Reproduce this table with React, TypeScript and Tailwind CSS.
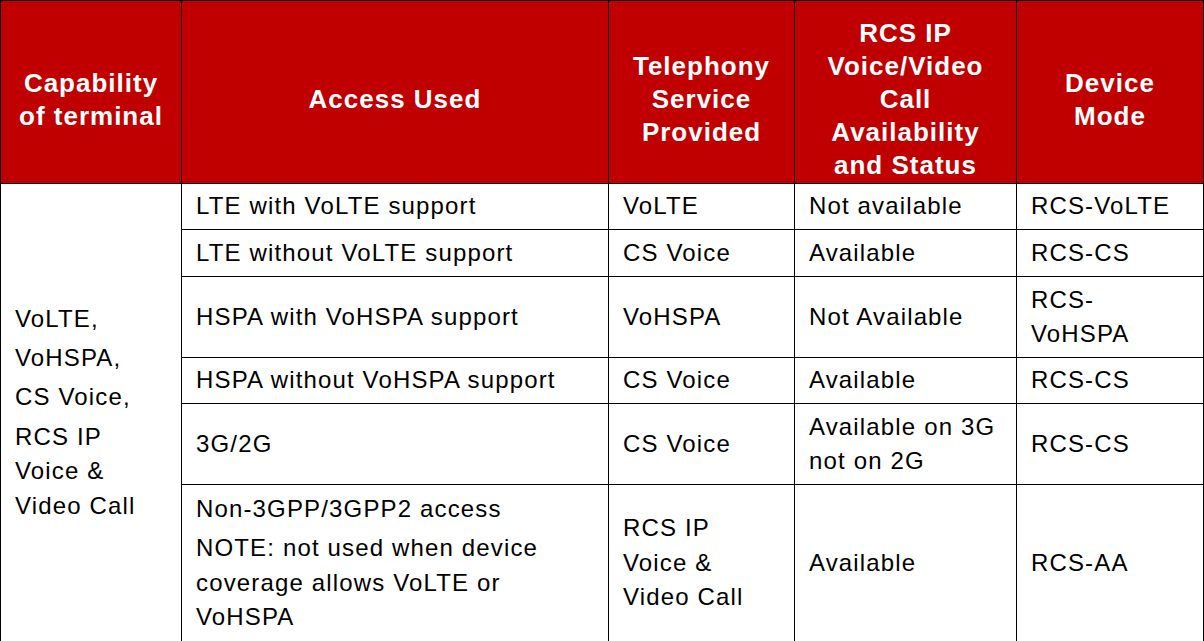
const rows = [
  { access: ['LTE with VoLTE support'], tel: ['VoLTE'], rcs: ['Not available'], mode: ['RCS-VoLTE'], h: 'h-[46px]' },
  { access: ['LTE without VoLTE support'], tel: ['CS Voice'], rcs: ['Available'], mode: ['RCS-CS'], h: 'h-[47px]' },
  { access: ['HSPA with VoHSPA support'], tel: ['VoHSPA'], rcs: ['Not Available'], mode: ['RCS-', 'VoHSPA'], h: 'h-[81px]' },
  { access: ['HSPA without VoHSPA support'], tel: ['CS Voice'], rcs: ['Available'], mode: ['RCS-CS'], h: 'h-[46px]' },
  { access: ['3G/2G'], tel: ['CS Voice'], rcs: ['Available on 3G', 'not on 2G'], mode: ['RCS-CS'], h: 'h-[81px]' },
]

function Lines({ lines }: { lines: string[] }) {
  return (
    <>
      {lines.map((l, i) => (
        <span key={i} className="block">
          {l}
        </span>
      ))}
    </>
  )
}

const th = 'border border-black bg-[#c00000] px-[4px] pt-[15px] pb-0 text-center align-middle text-[26px] font-bold leading-[33px] tracking-[1px] text-white'
const td = 'border border-black px-[14px] py-0 align-middle text-left'

export default function App() {
  return (
    <div className="bg-white" style={{ fontFamily: '"Liberation Sans", Arial, sans-serif' }}>
      <table className="w-[1203px] table-fixed border-collapse text-[24px] leading-[34.5px] tracking-[1.15px] text-black">
        <colgroup>
          <col className="w-[181px]" />
          <col className="w-[427px]" />
          <col className="w-[186px]" />
          <col className="w-[222px]" />
          <col className="w-[187px]" />
        </colgroup>
        <thead>
          <tr className="h-[183px]">
            <th className={th}>
              <Lines lines={['Capability', 'of terminal']} />
            </th>
            <th className={th}>Access Used</th>
            <th className={th}>
              <Lines lines={['Telephony', 'Service', 'Provided']} />
            </th>
            <th className={th}>
              <Lines lines={['RCS IP', 'Voice/Video', 'Call', 'Availability', 'and Status']} />
            </th>
            <th className={th}>
              <Lines lines={['Device', 'Mode']} />
            </th>
          </tr>
        </thead>
        <tbody>
          {rows.map((r, i) => (
            <tr key={i} className={r.h}>
              {i === 0 && (
                <td rowSpan={6} className={td}>
                  <p>VoLTE,</p>
                  <p className="mt-[4px]">VoHSPA,</p>
                  <p className="mt-[5px]">CS Voice,</p>
                  <p className="mt-[5px]">
                    RCS IP
                    <br />
                    Voice &amp;
                    <br />
                    Video Call
                  </p>
                </td>
              )}
              <td className={td}>
                <Lines lines={r.access} />
              </td>
              <td className={td}>
                <Lines lines={r.tel} />
              </td>
              <td className={td}>
                <Lines lines={r.rcs} />
              </td>
              <td className={td}>
                <Lines lines={r.mode} />
              </td>
            </tr>
          ))}
          <tr className="h-[157px]">
            <td className={td}>
              <p>Non-3GPP/3GPP2 access</p>
              <p className="mt-[5px]">
                NOTE: not used when device
                <br />
                coverage allows VoLTE or
                <br />
                VoHSPA
              </p>
            </td>
            <td className={td}>
              <Lines lines={['RCS IP', 'Voice &', 'Video Call']} />
            </td>
            <td className={td}>Available</td>
            <td className={td}>RCS-AA</td>
          </tr>
        </tbody>
      </table>
    </div>
  )
}
